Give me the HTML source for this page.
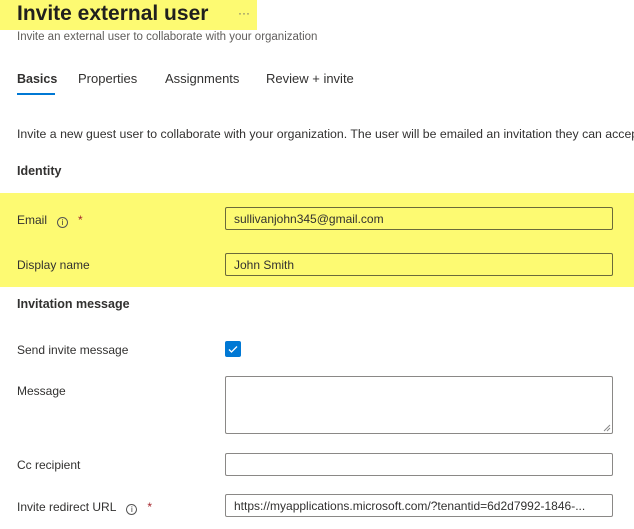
<!DOCTYPE html>
<html><head><style>
*{margin:0;padding:0;box-sizing:border-box}
body{width:634px;height:529px;overflow:hidden;background:#fff;font-family:"Liberation Sans",sans-serif;color:#323130;position:relative}
.a{position:absolute;white-space:nowrap}
.hl{position:absolute;background:#fdfa72}
.lbl{font-size:12px;color:#323130}
.inp{position:absolute;left:225px;width:388px;border:1px solid #8a8886;background:transparent;font-size:12px;padding-left:8px;display:flex;align-items:center;border-radius:2px}
.info{display:inline-block;width:11px;height:11px;border:1px solid #555;border-radius:50%;font-size:8px;text-align:center;line-height:9px;margin-left:10px;vertical-align:-1px}
.st{color:#a4262c;margin-left:10px}
</style></head><body>
<div class="hl" style="left:0;top:0;width:257px;height:30px"></div>
<div class="hl" style="left:0;top:193px;width:634px;height:94px"></div>
<div class="a" style="left:17px;top:2px;font-size:21px;font-weight:bold;color:#201f1e">Invite external user</div>
<div class="a" style="left:238px;top:6px;font-size:12px;color:#666">···</div>
<div class="a" style="left:17px;top:31px;font-size:11.5px;color:#605e5c">Invite an external user to collaborate with your organization</div>
<div class="a" style="left:17px;top:72px;font-size:12.5px;font-weight:bold;color:#323130">Basics</div>
<div class="a" style="left:17px;top:93px;width:38px;height:2px;background:#0078d4"></div>
<div class="a" style="left:78px;top:71px;font-size:13px">Properties</div>
<div class="a" style="left:165px;top:71px;font-size:13px">Assignments</div>
<div class="a" style="left:266px;top:71px;font-size:13px">Review + invite</div>
<div class="a" style="left:17px;top:127px;font-size:12.3px">Invite a new guest user to collaborate with your organization. The user will be emailed an invitation they can accept</div>
<div class="a" style="left:17px;top:164px;font-size:12.5px;font-weight:bold">Identity</div>
<div class="a lbl" style="left:17px;top:213px">Email<span class="info">i</span><span class="st">*</span></div>
<div class="inp" style="top:207px;height:23px;border-color:#6b6a3a">sullivanjohn345@gmail.com</div>
<div class="a lbl" style="left:17px;top:258px">Display name</div>
<div class="inp" style="top:253px;height:23px;border-color:#6b6a3a">John Smith</div>
<div class="a" style="left:17px;top:297px;font-size:12.5px;font-weight:bold">Invitation message</div>
<div class="a lbl" style="left:17px;top:343px">Send invite message</div>
<div class="a" style="left:225px;top:341px;width:16px;height:16px;background:#0078d4;border-radius:2px"><svg width="16" height="16"><path d="M4 8.5l2.5 2.5 5.5-5.5" stroke="#fff" stroke-width="1.3" fill="none"/></svg></div>
<div class="a lbl" style="left:17px;top:384px">Message</div>
<div class="inp" style="top:376px;height:58px"><svg style="position:absolute;right:1px;bottom:1px" width="8" height="8"><path d="M7 1L1 7M7 4L4 7" stroke="#888" stroke-width="1"/></svg></div>
<div class="a lbl" style="left:17px;top:458px">Cc recipient</div>
<div class="inp" style="top:453px;height:23px"></div>
<div class="a lbl" style="left:17px;top:500px">Invite redirect URL<span class="info">i</span><span class="st">*</span></div>
<div class="inp" style="top:494px;height:23px">https://myapplications.microsoft.com/?tenantid=6d2d7992-1846-...</div>
</body></html>
